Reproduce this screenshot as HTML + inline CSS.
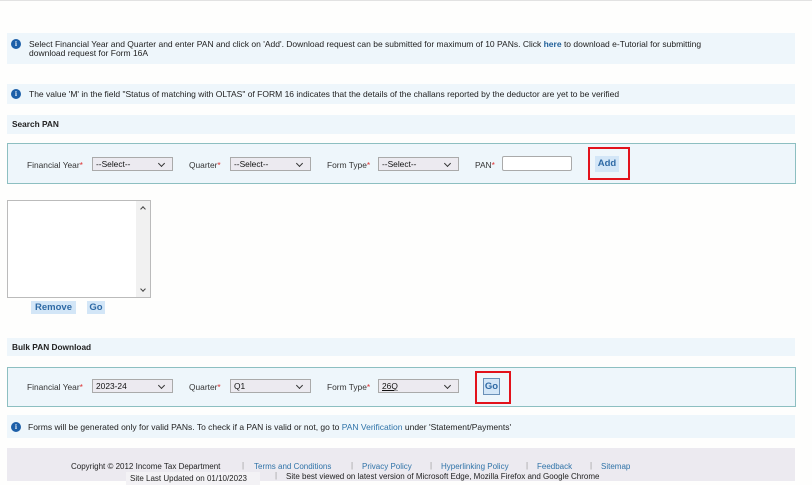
<!DOCTYPE html>
<html><head><meta charset="utf-8"><style>
*{margin:0;padding:0;box-sizing:border-box}
body{width:812px;height:485px;background:#fefefd;font-family:"Liberation Sans",Arial,sans-serif;font-size:8px;color:#222;position:relative;overflow:hidden}
.a{position:absolute}
.info{position:absolute;left:7px;width:788px;background:#eef6fb}
.ic{position:absolute;width:10px;height:10px;border-radius:50%;background:#1d5fa8;color:#fff;font:bold 7px "Liberation Serif",serif;text-align:center;line-height:10px}
.t{position:absolute;font-size:8.5px;line-height:9px;white-space:nowrap}
.bar{position:absolute;left:7px;width:788px;background:#eef6fb;font-weight:bold;font-size:8.3px;padding-left:5px}
.box{position:absolute;left:7px;width:789px;background:#eef6fb;border:1px solid #8dbfc1}
.lbl{position:absolute;font-size:8.4px;color:#333}
.lbl i{color:#d33;font-style:normal}
.sel{position:absolute;height:14px;border:1px solid #aaa;background:#eceaf0;font-size:8.4px;padding-left:3px;line-height:12px;color:#111}
.sel:after{content:"";position:absolute;right:8px;top:3px;width:4px;height:4px;border-right:1px solid #333;border-bottom:1px solid #333;transform:rotate(45deg)}
.btn{position:absolute;background:#d3e6f7;color:#2f6aa5;font-weight:bold;font-size:9.5px;text-align:center}
.red{position:absolute;border:2px solid #e2121b}
.f{position:absolute;font-size:8px}
.lk{color:#2f73a8}
.sep{color:#999}
</style></head><body>
<div class="a" style="left:0;top:0;width:812px;height:1px;background:#e2e2e2"></div>

<div class="info" style="top:33px;height:31px"></div>
<div class="ic" style="left:11px;top:39px">i</div>
<div class="t" style="left:29px;top:40px">Select Financial Year and Quarter and enter PAN and click on 'Add'. Download request can be submitted for maximum of 10 PANs. Click <b style="color:#1f5f99">here</b> to download e-Tutorial for submitting<br>download request for Form 16A</div>

<div class="info" style="top:84px;height:20px"></div>
<div class="ic" style="left:11px;top:89px">i</div>
<div class="t" style="left:29px;top:90px">The value 'M' in the field "Status of matching with OLTAS" of FORM 16 indicates that the details of the challans reported by the deductor are yet to be verified</div>

<div class="bar" style="top:115px;height:19px;line-height:19px">Search PAN</div>

<div class="box" style="top:143px;height:41px"></div>
<div class="lbl" style="left:27px;top:160px">Financial Year<i>*</i></div>
<div class="sel" style="left:92px;top:157px;width:81px">--Select--</div>
<div class="lbl" style="left:189px;top:160px">Quarter<i>*</i></div>
<div class="sel" style="left:230px;top:157px;width:81px">--Select--</div>
<div class="lbl" style="left:327px;top:160px">Form Type<i>*</i></div>
<div class="sel" style="left:378px;top:157px;width:81px">--Select--</div>
<div class="lbl" style="left:475px;top:160px">PAN<i>*</i></div>
<div class="a" style="left:502px;top:156px;width:70px;height:15px;border:1px solid #aaa;border-radius:2px;background:#fff"></div>
<div class="btn" style="left:595px;top:156px;width:24px;height:16px;line-height:16px">Add</div>
<div class="red" style="left:588px;top:147px;width:42px;height:33px"></div>

<div class="a" style="left:7px;top:200px;width:144px;height:98px;border:1px solid #bbb;background:#fff"></div>
<div class="a" style="left:136px;top:201px;width:14px;height:96px;background:#f1f1f1"></div>
<div class="a" style="left:141px;top:207px;width:4px;height:4px;border-left:1px solid #444;border-top:1px solid #444;transform:rotate(45deg)"></div>
<div class="a" style="left:141px;top:287px;width:4px;height:4px;border-right:1px solid #444;border-bottom:1px solid #444;transform:rotate(45deg)"></div>
<div class="btn" style="left:31px;top:301px;width:45px;height:13px;line-height:13px">Remove</div>
<div class="btn" style="left:87px;top:301px;width:18px;height:13px;line-height:13px">Go</div>

<div class="bar" style="top:338px;height:18px;line-height:18px">Bulk PAN Download</div>

<div class="box" style="top:367px;height:40px"></div>
<div class="lbl" style="left:27px;top:382px">Financial Year<i>*</i></div>
<div class="sel" style="left:92px;top:379px;width:81px">2023-24</div>
<div class="lbl" style="left:189px;top:382px">Quarter<i>*</i></div>
<div class="sel" style="left:230px;top:379px;width:81px">Q1</div>
<div class="lbl" style="left:327px;top:382px">Form Type<i>*</i></div>
<div class="sel" style="left:378px;top:379px;width:81px"><u>26Q</u></div>
<div class="btn" style="left:483px;top:378px;width:17px;height:17px;line-height:15px;border:1px solid #6a90b8">Go</div>
<div class="red" style="left:475px;top:371px;width:36px;height:33px"></div>

<div class="info" style="top:415px;height:23px"></div>
<div class="ic" style="left:11px;top:422px">i</div>
<div class="t" style="left:28px;top:423px">Forms will be generated only for valid PANs. To check if a PAN is valid or not, go to <span class="lk">PAN Verification</span> under 'Statement/Payments'</div>

<div class="a" style="left:7px;top:448px;width:788px;height:33px;background:#eceaf0"></div>
<div class="f" style="left:71px;top:462px">Copyright © 2012 Income Tax Department</div>
<div class="f sep" style="left:242px;top:461px">|</div>
<div class="f lk" style="left:254px;top:462px">Terms and Conditions</div>
<div class="f sep" style="left:351px;top:461px">|</div>
<div class="f lk" style="left:362px;top:462px">Privacy Policy</div>
<div class="f sep" style="left:430px;top:461px">|</div>
<div class="f lk" style="left:441px;top:462px">Hyperlinking Policy</div>
<div class="f sep" style="left:526px;top:461px">|</div>
<div class="f lk" style="left:537px;top:462px">Feedback</div>
<div class="f sep" style="left:590px;top:461px">|</div>
<div class="f lk" style="left:601px;top:462px">Sitemap</div>
<div class="a" style="left:126px;top:472px;width:134px;height:13px;background:#f3f2f5"></div>
<div class="f" style="left:130px;top:474px">Site Last Updated on 01/10/2023</div>
<div class="f sep" style="left:275px;top:471px">|</div>
<div class="f" style="left:286px;top:472px">Site best viewed on latest version of Microsoft Edge, Mozilla Firefox and Google Chrome</div>
</body></html>
